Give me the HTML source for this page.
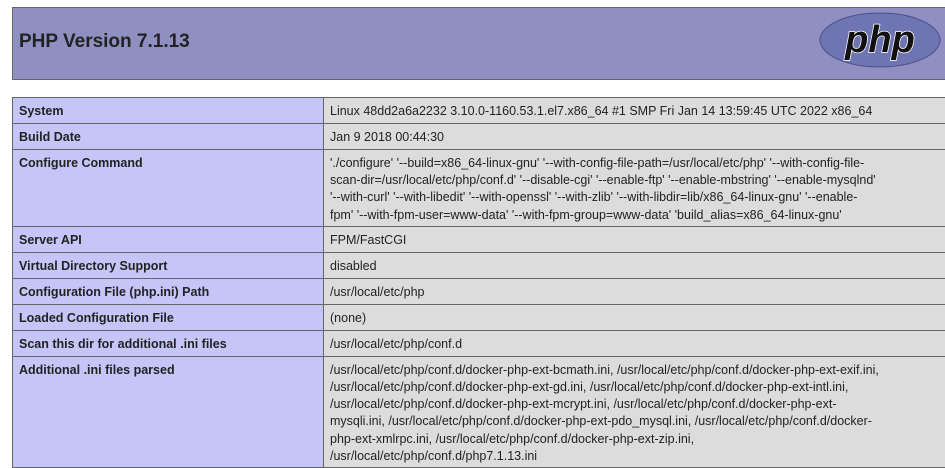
<!DOCTYPE html>
<html><head><meta charset="utf-8"><style>
body{margin:0;background:#fff;font-family:"Liberation Sans",Arial,sans-serif;font-size:12.5px;color:#222;width:945px;height:468px;overflow:hidden;position:relative}
.hdr{position:absolute;left:12px;top:7px;width:945px;height:73px;background:#8f8fc2;border:1px solid #666;box-sizing:border-box}
.hdr h1{margin:0;position:absolute;left:6px;top:23px;font-size:19px;font-weight:bold;color:#222}
.logo{position:absolute;left:818px;top:12px}
table{position:absolute;left:12px;top:97px;border-collapse:collapse;width:940px}
td{border:1px solid #666;padding:0 6px;vertical-align:top;line-height:18px;white-space:nowrap}
td.e{background:#c5c5f8;width:298px;font-weight:bold;padding-top:4px;padding-bottom:3px}
td.v{background:#dcdcdc;padding-top:4px;padding-bottom:3px}
td.m{line-height:17.2px;padding-top:5px;padding-bottom:2px}
</style></head><body>
<div class="hdr"><h1>PHP Version 7.1.13</h1></div>
<svg class="logo" width="124" height="56" viewBox="0 0 124 56"><ellipse cx="62" cy="28" rx="60" ry="27" fill="#6f74b3" stroke="#4d4f8a" stroke-width="1"/><text x="62" y="40" text-anchor="middle" font-family="Liberation Sans,sans-serif" font-weight="bold" font-style="italic" font-size="38" fill="#111" stroke="#fff" stroke-width="1.5" paint-order="stroke">php</text></svg>
<table>
<tr><td class="e">System</td><td class="v">Linux 48dd2a6a2232 3.10.0-1160.53.1.el7.x86_64 #1 SMP Fri Jan 14 13:59:45 UTC 2022 x86_64</td></tr>
<tr><td class="e">Build Date</td><td class="v">Jan 9 2018 00:44:30</td></tr>
<tr><td class="e">Configure Command</td><td class="v m">'./configure' '--build=x86_64-linux-gnu' '--with-config-file-path=/usr/local/etc/php' '--with-config-file-<br>scan-dir=/usr/local/etc/php/conf.d' '--disable-cgi' '--enable-ftp' '--enable-mbstring' '--enable-mysqlnd'<br>'--with-curl' '--with-libedit' '--with-openssl' '--with-zlib' '--with-libdir=lib/x86_64-linux-gnu' '--enable-<br>fpm' '--with-fpm-user=www-data' '--with-fpm-group=www-data' 'build_alias=x86_64-linux-gnu'</td></tr>
<tr><td class="e">Server API</td><td class="v">FPM/FastCGI</td></tr>
<tr><td class="e">Virtual Directory Support</td><td class="v">disabled</td></tr>
<tr><td class="e">Configuration File (php.ini) Path</td><td class="v">/usr/local/etc/php</td></tr>
<tr><td class="e">Loaded Configuration File</td><td class="v">(none)</td></tr>
<tr><td class="e">Scan this dir for additional .ini files</td><td class="v">/usr/local/etc/php/conf.d</td></tr>
<tr><td class="e">Additional .ini files parsed</td><td class="v m">/usr/local/etc/php/conf.d/docker-php-ext-bcmath.ini, /usr/local/etc/php/conf.d/docker-php-ext-exif.ini,<br>/usr/local/etc/php/conf.d/docker-php-ext-gd.ini, /usr/local/etc/php/conf.d/docker-php-ext-intl.ini,<br>/usr/local/etc/php/conf.d/docker-php-ext-mcrypt.ini, /usr/local/etc/php/conf.d/docker-php-ext-<br>mysqli.ini, /usr/local/etc/php/conf.d/docker-php-ext-pdo_mysql.ini, /usr/local/etc/php/conf.d/docker-<br>php-ext-xmlrpc.ini, /usr/local/etc/php/conf.d/docker-php-ext-zip.ini,<br>/usr/local/etc/php/conf.d/php7.1.13.ini</td></tr>
</table>
</body></html>
